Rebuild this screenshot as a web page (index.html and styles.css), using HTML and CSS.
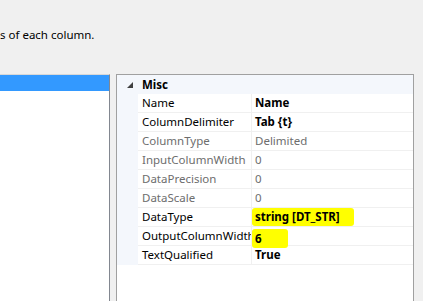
FILE: index.html
```html
<!DOCTYPE html>
<html lang="en">
<head>
    <meta charset="UTF-8">
    <title>Column Properties</title>
    <link rel="stylesheet" href="styles.css">
</head>
<body>
    <div class="intro">s of each column.</div>

    <div class="panes">
        <div class="column-list">
            <div class="selected-row"></div>
        </div>

        <div class="property-grid">
            <div class="category">
                <span class="expander">
                    <svg width="6" height="6" viewBox="0 0 6 6"><polygon points="6,0 6,6 0,6" fill="#404040"/></svg>
                </span>
                <span class="category-name">Misc</span>
            </div>
            <div class="prop"><span class="name">Name</span><span class="value bold">Name</span></div>
            <div class="prop"><span class="name">ColumnDelimiter</span><span class="value bold">Tab {t}</span></div>
            <div class="prop readonly"><span class="name">ColumnType</span><span class="value">Delimited</span></div>
            <div class="prop readonly"><span class="name">InputColumnWidth</span><span class="value">0</span></div>
            <div class="prop readonly"><span class="name">DataPrecision</span><span class="value">0</span></div>
            <div class="prop readonly"><span class="name">DataScale</span><span class="value">0</span></div>
            <div class="prop"><span class="name">DataType</span><span class="value marked bold"><mark class="mark-type">string [DT_STR]</mark></span></div>
            <div class="prop"><span class="name">OutputColumnWidth</span><span class="value marked bold"><mark class="mark-width">6</mark></span></div>
            <div class="prop"><span class="name">TextQualified</span><span class="value bold">True</span></div>
        </div>
    </div>
</body>
</html>
```

FILE: styles.css
```css
body {
    margin: 0;
    background: #f0f0f0;
    font-family: "Noto Sans", "Open Sans", sans-serif;
    font-size: 11.5px;
    color: #000;
    width: 423px;
    height: 301px;
    overflow: hidden;
}
.intro {
    height: 74px;
    box-sizing: border-box;
    padding-top: 27px;
    line-height: 16px;
}
.panes {
    display: flex;
    gap: 6px;
    height: 227px;
}
.column-list {
    width: 110px;
    box-sizing: border-box;
    background: #fff;
    border-top: 1px solid #d8d8d8;
    border-right: 1px solid #828790;
}
.selected-row {
    height: 16px;
    background: #3399ff;
}
.property-grid {
    width: 298px;
    box-sizing: border-box;
    background: #fff;
    border: 1px solid #a0a0a0;
    border-bottom: none;
}
.category {
    display: flex;
    align-items: center;
    height: 19px;
    background: #f4f7fc;
    font-weight: bold;
}
.expander {
    width: 24px;
    display: flex;
    justify-content: center;
    padding-left: 2px;
    box-sizing: border-box;
}
.category-name {
    padding-left: 1px;
}
.prop {
    display: flex;
    height: 19px;
    line-height: 18px;
    border-left: 21px solid #f4f7fc;
}
.prop .name {
    width: 114px;
    box-sizing: border-box;
    padding-left: 4px;
    white-space: nowrap;
    overflow: hidden;
    border-bottom: 1px solid #f0f0f0;
    border-right: 1px solid #f0f0f0;
}
.prop .value {
    flex: 1;
    padding-left: 3px;
    border-bottom: 1px solid #f0f0f0;
    white-space: nowrap;
}
.prop .value.marked {
    padding-left: 0;
}
.prop.readonly {
    color: #6d6d6d;
}
.bold {
    font-weight: bold;
}
mark {
    background: #ffff00;
    color: inherit;
    display: inline-block;
    border-radius: 3px;
}
.mark-type {
    padding: 0 14px 0 3px;
}
.mark-width {
    padding: 1px 26px 0 3px;
    margin-top: 2px;
}
```
